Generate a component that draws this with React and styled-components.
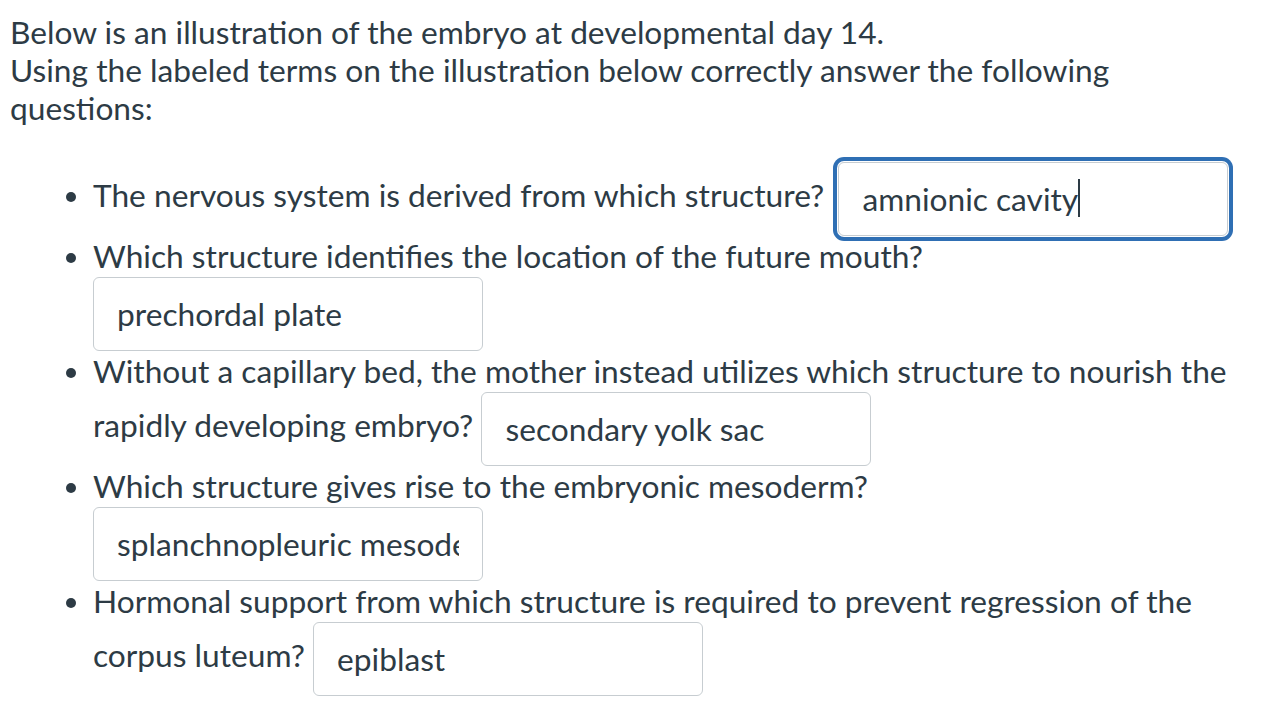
import { useMemo } from 'react';
import styled, { createGlobalStyle } from 'styled-components';

const FONT = "Lato, 'Noto Sans', 'Liberation Sans', sans-serif";
const SIZE = 31.7;

const questions = [
  { before: 'The nervous system is derived from which structure?', answer: 'amnionic cavity', focused: true },
  { before: 'Which structure identifies the location of the future mouth?', answer: 'prechordal plate' },
  {
    before: 'Without a capillary bed, the mother instead utilizes which structure to nourish the rapidly developing embryo?',
    answer: 'secondary yolk sac',
  },
  { before: 'Which structure gives rise to the embryonic mesoderm?', answer: 'splanchnopleuric mesoderm' },
  {
    before: 'Hormonal support from which structure is required to prevent regression of the corpus luteum?',
    answer: 'epiblast',
  },
];

const measure = (text) => {
  if (typeof document === 'undefined') return 0;
  const ctx = document.createElement('canvas').getContext('2d');
  ctx.font = `${SIZE}px ${FONT}`;
  return ctx.measureText(text).width;
};

const Answer = ({ value, focused }) => {
  const caretLeft = useMemo(() => (focused ? measure(value) : 0), [focused, value]);
  return (
    <FieldWrap $focused={focused}>
      <Field type='text' defaultValue={value} readOnly $focused={focused} />
      {focused && <Caret style={{ left: 24 + caretLeft }} />}
    </FieldWrap>
  );
};

const App = () => {
  return (
    <>
      <GlobalStyle />
      <Page>
        <Intro>
          Below is an illustration of the embryo at developmental day 14.
          <br />
          Using the labeled terms on the illustration below correctly answer the following questions:
        </Intro>
        <List>
          {questions.map((q) => (
            <Item key={q.answer}>
              {q.before} <Answer value={q.answer} focused={q.focused} />
            </Item>
          ))}
        </List>
      </Page>
    </>
  );
};

const GlobalStyle = createGlobalStyle`
  body {
    margin: 0;
    background: #fff;
  }
`;

const Page = styled.div`
  padding: 13px 10px;
  font-family: ${FONT};
  font-size: ${SIZE}px;
  line-height: 38px;
  color: #2d3b45;
`;

const Intro = styled.p`
  margin: 0 0 33px;
`;

const List = styled.ul`
  margin: 0;
  padding-left: 83px;
  list-style: disc;
`;

const Item = styled.li`
  padding: 0;
`;

const FieldWrap = styled.span`
  position: relative;
  display: inline-block;
  vertical-align: middle;
  margin: 2px 0 1px ${({ $focused }) => ($focused ? '6px' : '0')};
`;

const Field = styled.input`
  display: block;
  box-sizing: border-box;
  width: 390px;
  height: 74px;
  padding: 0 23px;
  border: 1px solid #c7cdd1;
  border-radius: 6px;
  background: #fff;
  font-family: ${FONT};
  font-size: ${SIZE}px;
  color: #2d3b45;
  outline: none;
  box-shadow: ${({ $focused }) => ($focused ? '0 0 0 1px #fff, 0 0 0 5px #2f6fb4' : 'none')};
`;

const Caret = styled.span`
  position: absolute;
  top: 17px;
  width: 2px;
  height: 38px;
  background: #2d3b45;
`;

export default App;
